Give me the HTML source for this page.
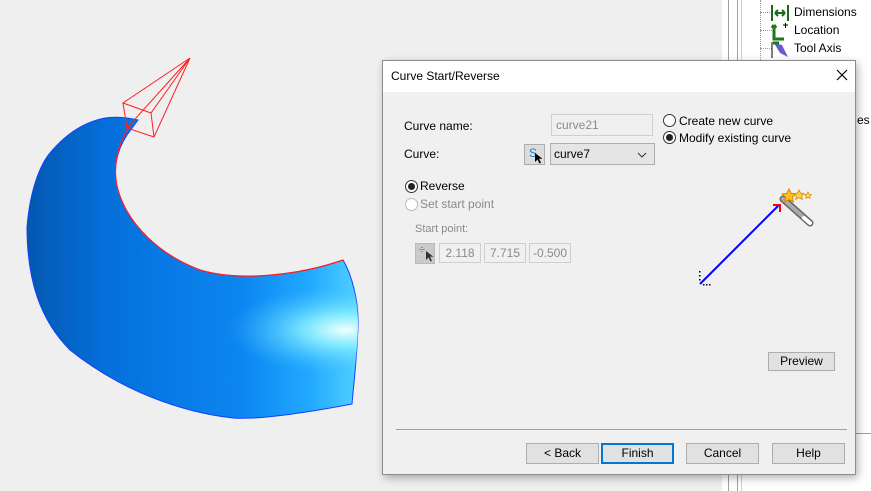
<!DOCTYPE html>
<html><head><style>
*{margin:0;padding:0;box-sizing:border-box}
body{width:871px;height:491px;overflow:hidden;background:#efefef;font-family:"Liberation Sans",sans-serif;font-size:12px;color:#000;position:relative}
.a{position:absolute}
.btn{position:absolute;background:#e1e1e1;border:1px solid #adadad;text-align:center;line-height:18px;font-size:12px}
.tb{position:absolute;background:#f0f0f0;border:1px solid #cfcfcf;color:#8a8a8a;line-height:18px;padding-left:4px}
.rad{position:absolute;width:13px;height:13px;border:1px solid #333;border-radius:50%;background:#fff}
.rad.on::after{content:"";position:absolute;left:2px;top:2px;width:7px;height:7px;border-radius:50%;background:#222}
</style></head><body>
<div class="a" style="left:722px;top:0;width:149px;height:491px;background:#fff"></div>
<div class="a" style="left:728px;top:0;width:1px;height:491px;background:#a0a0a0"></div>
<div class="a" style="left:737px;top:0;width:1px;height:491px;background:#a0a0a0"></div>
<div class="a" style="left:741px;top:0;width:1px;height:491px;background:#d0d0d0"></div>
<div class="a" style="left:760px;top:0;width:0;height:60px;border-left:1px dotted #999"></div>
<div class="a" style="left:760px;top:12px;width:12px;border-top:1px dotted #999"></div>
<div class="a" style="left:760px;top:30px;width:12px;border-top:1px dotted #999"></div>
<div class="a" style="left:760px;top:48px;width:12px;border-top:1px dotted #999"></div>
<svg class="a" style="left:770px;top:3px" width="20" height="56">
<path d="M2 2v16M18 2v16M5 10h10M5 10l3-3M5 10l3 3M15 10l-3-3M15 10l-3 3" stroke="#1a6a1a" stroke-width="2" fill="none"/>
<path d="M4 22v14h10M4 22l-2 3M4 22l2 3" stroke="#1a7a1a" stroke-width="3" fill="none"/><path d="M13 22h5M15.5 20v5" stroke="#000"/>
<path d="M2 39v16" stroke="#000"/><path d="M4 40l8 2l6 12l-8-4z" fill="#6a5acd"/><path d="M3 40l6 0" stroke="#1a7a1a" stroke-width="3"/>
</svg>
<div class="a" style="left:794px;top:5px;font-size:12px">Dimensions</div>
<div class="a" style="left:794px;top:23px">Location</div>
<div class="a" style="left:794px;top:41px">Tool Axis</div>
<div class="a" style="left:857px;top:113px">es</div>
<div class="a" style="left:856px;top:433px;width:15px;height:1px;background:#a0a0a0"></div>
<svg class="a" style="left:0;top:0" width="380" height="491">
<defs>
<linearGradient id="g" x1="0" y1="0" x2="1" y2="0"><stop offset="0" stop-color="#0358b0"/><stop offset=".25" stop-color="#0570dc"/><stop offset=".65" stop-color="#0c86f0"/><stop offset=".85" stop-color="#20a8ff"/><stop offset="1" stop-color="#50d0ff"/></linearGradient>
<radialGradient id="h" cx="345" cy="330" rx="100" r="90" gradientUnits="userSpaceOnUse" gradientTransform="translate(345 330) scale(1.3 0.5) translate(-345 -330)"><stop offset="0" stop-color="#f4ffff" stop-opacity="1"/><stop offset=".35" stop-color="#90f4ff" stop-opacity=".8"/><stop offset="1" stop-color="#40c0ff" stop-opacity="0"/></radialGradient>
</defs>
<path id="s" d="M97 120C110 116 125 117 138 120L127 135C117 150 112 170 118 190C128 225 160 255 200 270C240 282 300 275 343 260C352 275 358 300 358 320C358 350 354 380 352 404C310 412 260 420 233 418C180 412 120 390 70 350C40 320 27 280 27 227C30 190 40 165 50 153C65 135 80 125 97 120Z" fill="url(#g)" stroke="#1040ff" stroke-width="1"/>
<path d="M97 120C110 116 125 117 138 120L127 135C117 150 112 170 118 190C128 225 160 255 200 270C240 282 300 275 343 260C352 275 358 300 358 320C358 350 354 380 352 404C310 412 260 420 233 418C180 412 120 390 70 350C40 320 27 280 27 227C30 190 40 165 50 153C65 135 80 125 97 120Z" fill="url(#h)"/>
<path d="M130 126C117 145 112 168 118 190C128 225 160 255 200 270C240 282 300 275 343 260" stroke="#ff2020" fill="none" stroke-width="1.2"/>
<g stroke="#ff2020" fill="none" stroke-width="1"><path d="M190 58L123 103L151 113L190 58L154 137L127 128L190 58M123 103L127 128M151 113L154 137"/></g>
</svg>
<div class="a" style="left:382px;top:60px;width:474px;height:415px;background:#f0f0f0;border:1px solid #8c8c8c;box-shadow:2px 3px 8px rgba(0,0,0,.3)">
<div class="a" style="left:0;top:0;width:472px;height:31px;background:#fff"></div>
<div class="a" style="left:8px;top:8px;font-size:12px">Curve Start/Reverse</div>
<svg class="a" style="left:453px;top:8px" width="12" height="12"><path d="M1 1L11 11M11 1L1 11" stroke="#000" stroke-width="1.2"/></svg>
<div class="a" style="left:21px;top:58px">Curve name:</div>
<div class="tb" style="left:168px;top:53px;width:102px;height:22px;line-height:20px">curve21</div>
<div class="a" style="left:21px;top:86px">Curve:</div>
<div class="a" style="left:141px;top:83px;width:21px;height:21px;background:#dcdcdc;border:1px solid #adadad"><span style="position:absolute;left:4px;top:1px;color:#1a80e0;font-size:12px">S</span><svg class="a" style="left:9px;top:7px" width="10" height="12"><path d="M1 1v9l2.5-2.5 2 4 1.5-.7-2-4h3.5z" fill="#000"/></svg></div>
<div class="a" style="left:167px;top:82px;width:105px;height:22px;background:#e5e5e5;border:1px solid #adadad;line-height:20px;padding-left:3px">curve7<svg class="a" style="left:86px;top:8px" width="10" height="6"><path d="M1 1l4 4 4-4" stroke="#333" fill="none"/></svg></div>
<div class="rad" style="left:280px;top:53px"></div><div class="a" style="left:296px;top:53px">Create new curve</div>
<div class="rad on" style="left:280px;top:70px"></div><div class="a" style="left:296px;top:70px">Modify existing curve</div>
<div class="rad on" style="left:22px;top:119px"></div><div class="a" style="left:37px;top:118px">Reverse</div>
<div class="rad" style="left:22px;top:137px;border-color:#bbb"></div><div class="a" style="left:37px;top:136px;color:#8a8a8a">Set start point</div>
<div class="a" style="left:32px;top:162px;color:#8a8a8a;font-size:11px">Start point:</div>
<div class="a" style="left:32px;top:182px;width:20px;height:21px;background:#cacaca;border:1px solid #bbb"><svg class="a" style="left:2px;top:2px" width="16" height="16"><path d="M4 1v5M1.5 3.5h5" stroke="#555" stroke-dasharray="1 1"/><path d="M8 5v9l2.5-2.5 2 4 1.5-.7-2-4h3.5z" fill="#333"/></svg></div>
<div class="tb" style="left:56px;top:182px;width:42px;height:20px;text-align:center;padding:0">2.118</div>
<div class="tb" style="left:101px;top:182px;width:42px;height:20px;text-align:center;padding:0">7.715</div>
<div class="tb" style="left:146px;top:182px;width:42px;height:20px;text-align:center;padding:0">-0.500</div>
<svg class="a" style="left:308px;top:120px" width="130" height="110">
<path d="M9 103L88 24" stroke="#0000ff" stroke-width="2"/>
<path d="M82 24h7v7" stroke="#ff0000" stroke-width="2" fill="none"/>
<g fill="#000"><rect x="8" y="90" width="1.5" height="1.5"/><rect x="8" y="94" width="1.5" height="1.5"/><rect x="8" y="98" width="1.5" height="1.5"/><rect x="12" y="103" width="1.5" height="1.5"/><rect x="15" y="103" width="1.5" height="1.5"/><rect x="18" y="103" width="1.5" height="1.5"/></g>
<path d="M92 18L119 42" stroke="#666" stroke-width="7" stroke-linecap="round"/>
<path d="M92 18L119 42" stroke="#aaa" stroke-width="4" stroke-linecap="round"/>
<path d="M113 37L119 42" stroke="#fff" stroke-width="4" stroke-linecap="round"/>
<path d="M98 8l2.2 4.4 4.6.6-3.4 3.3 1 4.6-4.4-2.3-4.4 2.3 1-4.6-3.4-3.3 4.6-.6z" fill="#ffc020" stroke="#e08000"/>
<path d="M108 9l1.6 3.2 3.4.4-2.4 2.4.7 3.4-3.3-1.7-3.3 1.7.7-3.4-2.4-2.4 3.4-.4z" fill="#ffd040" stroke="#e08000" stroke-width=".8"/>
<path d="M117 11l1.1 2.2 2.3.3-1.7 1.6.4 2.3-2.1-1.1-2.1 1.1.4-2.3-1.7-1.6 2.3-.3z" fill="#ffe060" stroke="#e08000" stroke-width=".7"/>
</svg>
<div class="btn" style="left:385px;top:291px;width:67px;height:19px;line-height:17px">Preview</div>
<div class="a" style="left:13px;top:368px;width:451px;height:1px;background:#a0a0a0"></div>
<div class="btn" style="left:143px;top:382px;width:73px;height:21px">&lt; Back</div>
<div class="btn" style="left:218px;top:382px;width:73px;height:21px;border:2px solid #0078d7;line-height:17px">Finish</div>
<div class="btn" style="left:303px;top:382px;width:73px;height:21px">Cancel</div>
<div class="btn" style="left:389px;top:382px;width:73px;height:21px">Help</div>
</div>
</body></html>
